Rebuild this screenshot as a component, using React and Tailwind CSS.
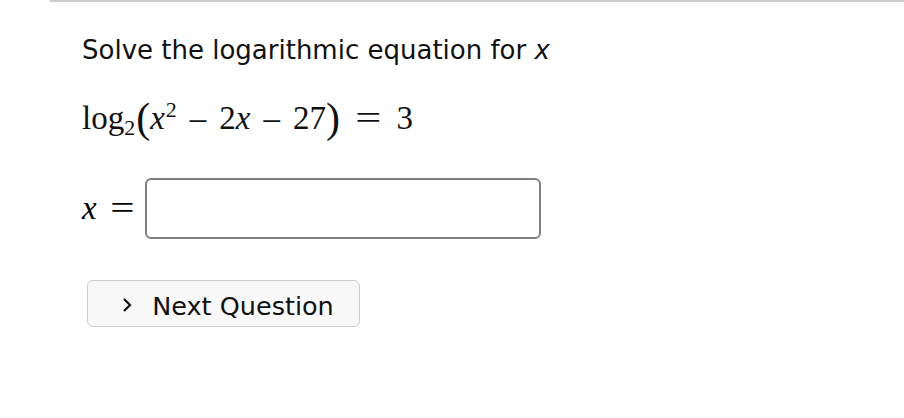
import React from "react";

const mathFont = { fontFamily: '"Liberation Serif", "DejaVu Serif", serif' };

const App = () => {
  return (
    <div className="w-[904px] h-[418px] bg-white relative font-['DejaVu_Sans',sans-serif] text-black">
      <div className="ml-[50px] h-[2px] bg-[#cccccc]" />
      <div className="pl-[82px] pt-[30px] flex flex-col">
        <h1 className="text-[26px] leading-[36px] text-[#111]">
          Solve the logarithmic equation for <span className="italic">x</span>
        </h1>
        <div className="mt-[26px] h-[50px] flex items-center text-[33px] text-[#111]" style={mathFont}>
          <span>log</span>
          <span className="text-[22px] relative top-[8px] mr-[1px]">2</span>
          <span className="text-[42px] relative top-[-1px]">(</span>
          <span className="italic">x</span>
          <span className="text-[22px] relative -top-[10px] ml-[1px]">2</span>
          <span className="mx-[13px]">–</span>
          <span>2</span>
          <span className="italic">x</span>
          <span className="mx-[13px]">–</span>
          <span>27</span>
          <span className="text-[42px] relative top-[-1px]">)</span>
          <span className="inline-block mx-[19px] scale-x-140">=</span>
          <span>3</span>
        </div>
        <div className="mt-[34px] flex items-center">
          <span className="text-[33px] italic" style={mathFont}>x</span>
          <span className="inline-block text-[33px] ml-[16px] mr-[14px] scale-x-130" style={mathFont}>=</span>
          <input
            type="text"
            className="w-[396px] h-[61px] border-2 border-[#808080] rounded-[6px] outline-none"
          />
        </div>
        <button className="mt-[41px] ml-[5px] w-[273px] h-[47px] pt-[6px] pl-[8px] flex items-center justify-center gap-[19px] bg-[#f8f8f8] border border-[#cccccc] rounded-[6px] text-[25.5px] text-[#111]">
          <svg width="12" height="16" viewBox="0 0 12 16" fill="none" stroke="#111" strokeWidth="2.2" className="-mt-[4px]">
            <path d="M3 2l6 6-6 6" />
          </svg>
          <span>Next Question</span>
        </button>
      </div>
    </div>
  );
};

export default App;
